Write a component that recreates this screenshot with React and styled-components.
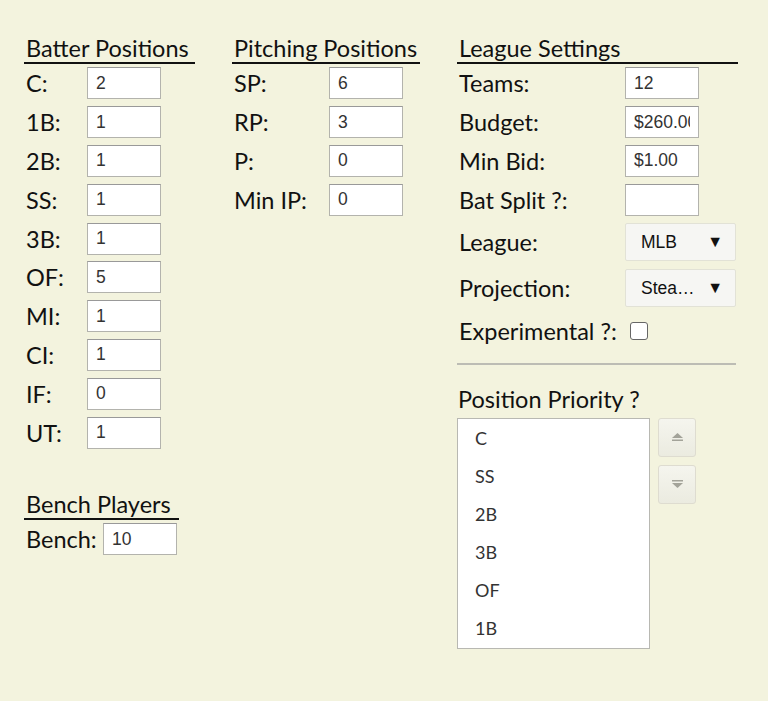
import React from 'react'
import styled, { createGlobalStyle } from 'styled-components'

const GlobalStyle = createGlobalStyle`
html, body {
    margin: 0;
    padding: 0;
    background-color: #f3f3de;
    min-height: 100%;
}
body {
    font-family: Lato, "Open Sans", sans-serif;
    color: #111;
}
`

const batters = [['C:', '2'], ['1B:', '1'], ['2B:', '1'], ['SS:', '1'], ['3B:', '1'], ['OF:', '5'], ['MI:', '1'], ['CI:', '1'], ['IF:', '0'], ['UT:', '1']]
const pitchers = [['SP:', '6'], ['RP:', '3'], ['P:', '0'], ['Min IP:', '0']]
const priority = ['C', 'SS', '2B', '3B', 'OF', '1B']

function UpIcon() {
    return (
        <svg width="13" height="10" viewBox="0 0 13 10">
            <path d="M6.5 1 L12 6 L1 6 Z" fill="#a3a399" />
            <rect x="1" y="7.5" width="11" height="1.5" fill="#a3a399" />
        </svg>
    )
}

function DownIcon() {
    return (
        <svg width="13" height="10" viewBox="0 0 13 10">
            <rect x="1" y="1" width="11" height="1.5" fill="#a3a399" />
            <path d="M1 4 L12 4 L6.5 9 Z" fill="#a3a399" />
        </svg>
    )
}

export default function App() {
    return (
        <Page>
            <GlobalStyle />
            <Column $width={208}>
                <Heading $width={171}>Batter Positions</Heading>
                {batters.map(([label, value]) => (
                    <Row key={label}>
                        <Label $width={63}>{label}</Label>
                        <NumberInput readOnly defaultValue={value} />
                    </Row>
                ))}
                <Heading $width={155} $top={39}>Bench Players</Heading>
                <Row>
                    <Label $width={79}>Bench:</Label>
                    <NumberInput readOnly defaultValue="10" />
                </Row>
            </Column>
            <Column $width={225}>
                <Heading $width={188}>Pitching Positions</Heading>
                {pitchers.map(([label, value]) => (
                    <Row key={label}>
                        <Label $width={97}>{label}</Label>
                        <NumberInput readOnly defaultValue={value} />
                    </Row>
                ))}
            </Column>
            <Column $width={282}>
                <Heading $width={281}>League Settings</Heading>
                <Row>
                    <Label $width={168}>Teams:</Label>
                    <NumberInput readOnly defaultValue="12" />
                </Row>
                <Row>
                    <Label $width={168}>Budget:</Label>
                    <NumberInput readOnly defaultValue="$260.00" />
                </Row>
                <Row>
                    <Label $width={168}>Min Bid:</Label>
                    <NumberInput readOnly defaultValue="$1.00" />
                </Row>
                <Row>
                    <Label $width={168}>Bat Split ?:</Label>
                    <NumberInput readOnly defaultValue="" />
                </Row>
                <Row $height={46}>
                    <Label $width={168}>League:</Label>
                    <Select><span>MLB</span><Arrow>▼</Arrow></Select>
                </Row>
                <Row $height={46}>
                    <Label $width={168}>Projection:</Label>
                    <Select><span>Stea…</span><Arrow>▼</Arrow></Select>
                </Row>
                <Row>
                    <Label>Experimental ?:</Label>
                    <Checkbox />
                </Row>
                <Divider />
                <SubHeading>Position Priority ?</SubHeading>
                <PriorityArea>
                    <ListBox>
                        {priority.map((p) => <ListItem key={p}>{p}</ListItem>)}
                    </ListBox>
                    <Buttons>
                        <MoveButton><UpIcon /></MoveButton>
                        <MoveButton><DownIcon /></MoveButton>
                    </Buttons>
                </PriorityArea>
            </Column>
        </Page>
    )
}

const Page = styled.div`
display: flex;
align-items: flex-start;
padding: 35px 0 0 24px;
min-height: 701px;
box-sizing: border-box;
`
const Column = styled.div`
width: ${(p) => p.$width}px;
display: flex;
flex-direction: column;
align-items: flex-start;
`
const Heading = styled.div`
width: ${(p) => p.$width}px;
box-sizing: border-box;
padding: 0 2px;
margin-top: ${(p) => p.$top || 0}px;
font-size: 23.5px;
line-height: 26px;
padding-bottom: 1px;
border-bottom: 2px solid #111;
white-space: nowrap;
`
const Row = styled.div`
display: flex;
align-items: center;
height: ${(p) => p.$height || 38.8}px;
padding-left: 2px;
`
const Label = styled.div`
width: ${(p) => (p.$width ? p.$width - 2 + 'px' : 'auto')};
font-size: 23.5px;
white-space: nowrap;
margin-right: ${(p) => (p.$width ? 0 : 13)}px;
`
const NumberInput = styled.input`
width: 74px;
height: 32px;
box-sizing: border-box;
border: 1px solid #b3b3ad;
border-top-color: #999;
background: #fff;
padding: 0 8px;
font-family: "Liberation Sans", Arial, sans-serif;
font-size: 17.5px;
color: #333;
outline: none;
`
const Select = styled.div`
width: 111px;
height: 38px;
box-sizing: border-box;
display: flex;
align-items: center;
justify-content: space-between;
padding: 0 12px 0 15px;
background: #f6f6f3;
border: 1px solid #e2e2d6;
border-radius: 2px;
font-family: "Liberation Sans", Arial, sans-serif;
font-size: 17.5px;
color: #111;
`
const Arrow = styled.span`
font-size: 16px;
`
const Checkbox = styled.span`
width: 16px;
height: 16px;
border: 1.5px solid #666;
border-radius: 3px;
background: #fff;
`
const Divider = styled.div`
width: 279px;
height: 2px;
background: #bcbcb4;
margin-top: 13px;
`
const SubHeading = styled.div`
font-size: 23.5px;
line-height: 27px;
margin-top: 21px;
padding-left: 1px;
`
const PriorityArea = styled.div`
display: flex;
align-items: flex-start;
gap: 8px;
margin-top: 5px;
`
const ListBox = styled.div`
width: 193px;
height: 231px;
box-sizing: border-box;
border: 1px solid #b8b8b2;
background: #fff;
padding-top: 0;
`
const ListItem = styled.div`
height: 38px;
line-height: 38px;
padding-left: 17px;
font-size: 18px;
color: #333;
`
const Buttons = styled.div`
display: flex;
flex-direction: column;
gap: 8px;
`
const MoveButton = styled.div`
width: 38px;
height: 39px;
box-sizing: border-box;
display: flex;
align-items: center;
justify-content: center;
border: 1px solid #dedcd0;
border-radius: 3px;
background: linear-gradient(#f5f5ee, #ebebe0);
`
